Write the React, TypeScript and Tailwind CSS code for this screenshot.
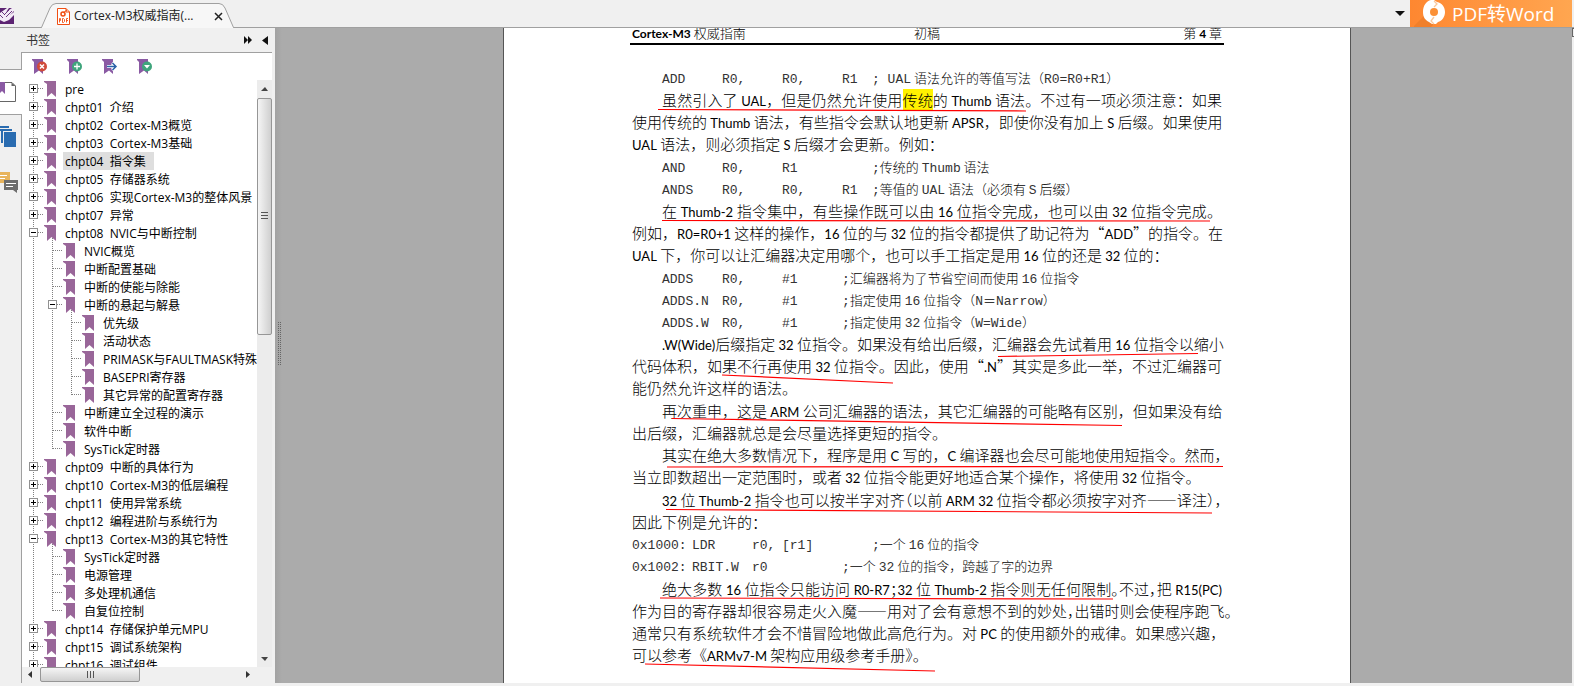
import clsx from "clsx";
import type { ReactNode } from "react";

type Guide = "pass" | "tee" | "end" | "blank";

type Bookmark = {
  label: string;
  open?: boolean;
  closed?: boolean;
  selected?: boolean;
  children?: Bookmark[];
};

const bookmarks: Bookmark[] = [
  { label: "pre", closed: true },
  { label: "chpt01  介绍", closed: true },
  { label: "chpt02  Cortex-M3概览", closed: true },
  { label: "chpt03  Cortex-M3基础", closed: true },
  { label: "chpt04  指令集", closed: true, selected: true },
  { label: "chpt05  存储器系统", closed: true },
  { label: "chpt06  实现Cortex-M3的整体风景", closed: true },
  { label: "chpt07  异常", closed: true },
  {
    label: "chpt08  NVIC与中断控制",
    open: true,
    children: [
      { label: "NVIC概览" },
      { label: "中断配置基础" },
      { label: "中断的使能与除能" },
      {
        label: "中断的悬起与解悬",
        open: true,
        children: [
          { label: "优先级" },
          { label: "活动状态" },
          { label: "PRIMASK与FAULTMASK特殊功" },
          { label: "BASEPRI寄存器" },
          { label: "其它异常的配置寄存器" },
        ],
      },
      { label: "中断建立全过程的演示" },
      { label: "软件中断" },
      { label: "SysTick定时器" },
    ],
  },
  { label: "chpt09  中断的具体行为", closed: true },
  { label: "chpt10  Cortex-M3的低层编程", closed: true },
  { label: "chpt11  使用异常系统", closed: true },
  { label: "chpt12  编程进阶与系统行为", closed: true },
  {
    label: "chpt13  Cortex-M3的其它特性",
    open: true,
    children: [
      { label: "SysTick定时器" },
      { label: "电源管理" },
      { label: "多处理机通信" },
      { label: "自复位控制" },
    ],
  },
  { label: "chpt14  存储保护单元MPU", closed: true },
  { label: "chpt15  调试系统架构", closed: true },
  { label: "chpt16  调试组件", closed: true },
];

function GuideCell({ kind }: { kind: Guide }) {
  return (
    <svg width="19" height="18" className="shrink-0" stroke="#808080" strokeDasharray="1 1" fill="none">
      {(kind === "pass" || kind === "tee") && <path d="M9.5 0V18" />}
      {kind === "end" && <path d="M9.5 0V9" />}
      {(kind === "tee" || kind === "end") && <path d="M10 8.5H19" />}
    </svg>
  );
}

function Toggle({ open, first, last }: { open?: boolean; first?: boolean; last?: boolean }) {
  return (
    <button className="shrink-0" aria-label={open ? "折叠" : "展开"}>
      <svg width="19" height="18" fill="none">
        <g stroke="#808080" strokeDasharray="1 1">
          {!first && <path d="M9.5 0V4" />}
          {!last && <path d="M9.5 14V18" />}
          <path d="M14 8.5H19" />
        </g>
        <rect x="5.5" y="4.5" width="8" height="8" fill="#fff" stroke="#919191" />
        <path d="M7 8.5H12" stroke="#000" />
        {!open && <path d="M9.5 6V11" stroke="#000" />}
      </svg>
    </button>
  );
}

function Flag({ stem }: { stem?: boolean }) {
  return (
    <svg width="20" height="18" className="shrink-0">
      <path d="M1 1H13V17L8.500 13L4 17V4L1 2Z" fill="#996699" />
      {stem && <path d="M9.500 14V18" stroke="#808080" strokeDasharray="1 1" />}
    </svg>
  );
}

function Branch({ items, guides }: { items: Bookmark[]; guides: Guide[] }) {
  const nested = guides.length > 0;
  return (
    <ul>
      {items.map((item, i) => {
        const last = i === items.length - 1;
        return (
          <li key={item.label}>
            <div className="flex h-[18px] items-center">
              {guides.map((g, n) => (
                <GuideCell key={n} kind={g} />
              ))}
              {item.open || item.closed ? (
                <Toggle open={item.open} first={!nested && i === 0} last={nested && last} />
              ) : (
                <GuideCell kind={last ? "end" : "tee"} />
              )}
              <Flag stem={item.open} />
              <button
                className={clsx(
                  "h-[18px] px-[2px] text-left leading-5 whitespace-pre text-black",
                  item.selected && "bg-[#dedede] pr-2"
                )}
              >
                {item.label}
              </button>
            </div>
            {item.children && (
              <Branch items={item.children} guides={[...guides, last ? "blank" : "pass"]} />
            )}
          </li>
        );
      })}
    </ul>
  );
}

function ToolButton({ label, children }: { label: string; children: ReactNode }) {
  return (
    <button aria-label={label}>
      <svg width="17" height="18" viewBox="0 0 17 18" fill="none">
        <path d="M0 1H11V16L7 12.500L2 16V4L0 2Z" fill="#8a5aa3" />
        {children}
      </svg>
    </button>
  );
}

function TabBar() {
  return (
    <header className="flex h-7 shrink-0 border-b border-[#a0a0a0] bg-[#f0f0f0]">
      <svg width="41" height="27" className="shrink-0">
        <rect y="8" width="14" height="16" fill="#5c2472" />
        <path d="M0 13L7 8H9L6 12L12 8H14V11L10 15L14 12V15L9 20L4 22L0 20Z" fill="#f3ebf6" />
        <path d="M0 15L3 18M4 15L9 10M6 17L12 11M2 12L5 15" stroke="#5c2472" strokeWidth="0.900" fill="none" />
      </svg>
      <div className="relative flex h-7 w-[193px] shrink-0 items-center pt-1">
        <svg width="193" height="28" className="absolute inset-0" fill="none">
          <path d="M0.500 27.500L9 8Q11 3.500 15 3.500H178Q182 3.500 184 8L192.500 27.500" fill="#f7f7f7" stroke="#a0a0a0" />
          <path d="M1 27.500H192" stroke="#f7f7f7" />
        </svg>
        <svg width="13" height="17" className="relative ml-4" fill="none" stroke="#f04e12">
          <path d="M0.500 0.500H9L12.500 4V16.500H0.500Z" fill="#fff" />
          <path d="M9 0.500V4H12.500" />
          <circle cx="6" cy="6" r="2" strokeWidth="1.500" />
          <path d="M6 5L10 2" />
          <path d="M2.500 14.500V10.500H3.500V12.500H2.500M5.500 10.500V14.500H6.500L7.500 13.500V11.500L6.500 10.500H5.500M9.500 14.500V10.500H11M9.500 12.500H11" strokeWidth="0.900" />
        </svg>
        <span className="relative ml-1 w-[128px] text-[12px] whitespace-nowrap text-[#222]">Cortex-M3权威指南(...</span>
        <button className="relative ml-3" aria-label="关闭">
          <svg width="9" height="9" stroke="#222" strokeWidth="1.500">
            <path d="M1 1L8 8M8 1L1 8" />
          </svg>
        </button>
      </div>
      <button className="ml-auto pr-1" aria-label="标签列表">
        <svg width="12" height="7">
          <path d="M1 1H11L6 6Z" fill="#111" />
        </svg>
      </button>
      <button className="mr-[2px] flex h-[27px] w-[162px] items-center bg-linear-to-r from-[#fe8730] to-[#ffa650] pl-1 text-white">
        <svg width="34" height="27" viewBox="0 0 34 27" fill="none">
          <path d="M0 26L11 15L20 24L17 27H0Z" fill="#e67a26" opacity="0.600" />
          <path d="M17 0H20L23 2C28 3 31 7 31 12C31 17 28 21 24 22L22 24H18L15 22C11 20 9 17 9 12C9 6 12 1 17 0Z" fill="#fff" />
          <circle cx="20" cy="12" r="4" fill="#fb9036" />
          <path d="M20 1L23 4L20 7M20 24L17 21L20 17" stroke="#f9c79b" strokeWidth="1.300" />
        </svg>
        <span className="ml-1 text-[19px] leading-6 whitespace-nowrap">PDF转Word</span>
      </button>
    </header>
  );
}

function Rail() {
  return (
    <nav className="flex w-[22px] shrink-0 flex-col">
      <div className="h-6 shrink-0" />
      <div className="h-[17px] shrink-0 border-r border-[#a0a0a0]" />
      <button className="h-[46px] shrink-0 border-y border-[#a0a0a0] bg-white" aria-label="书签">
        <svg width="16" height="22" fill="none">
          <path d="M0 1.500H12L15.500 5V20.500H0" stroke="#666" fill="#fff" />
          <path d="M11.500 1.500V5H15.500Z" fill="#666" />
          <path d="M0 1H5V13L2 10L0 12Z" fill="#8a5aa3" />
        </svg>
      </button>
      <div className="flex flex-1 flex-col items-start gap-6 border-r border-[#a0a0a0] pt-[11px]">
        <button aria-label="页面">
          <svg width="17" height="22">
            <path d="M0 0H9V2H0ZM0 3H12V5H3V17H1V5H0Z" fill="#2a6cb0" />
            <rect x="4" y="6" width="12" height="15" fill="#2a6cb0" />
          </svg>
        </button>
        <button aria-label="注释">
          <svg width="19" height="22">
            <path d="M0 0H10V9H4V11H0Z" fill="#e8b45c" />
            <path d="M0 3.500H7M0 6.500H5" stroke="#fff" />
            <path d="M4 8H18V18H17V21L13 18H4Z" fill="#6d6d6d" />
            <path d="M6 11.500H16M6 14.500H13" stroke="#fff" />
          </svg>
        </button>
      </div>
    </nav>
  );
}

function Sidebar() {
  return (
    <aside className="flex w-[253px] shrink-0 flex-col pr-[3px]">
      <div className="flex h-6 shrink-0 items-center pl-1 text-[12px] text-[#333]">
        <h2 className="flex-1 pt-[2px]">书签</h2>
        <button aria-label="展开面板">
          <svg width="9" height="8">
            <path d="M0 0L4 4L0 8ZM4 0L8 4L4 8Z" fill="#111" />
          </svg>
        </button>
        <button className="mr-1 ml-[9px]" aria-label="隐藏面板">
          <svg width="6" height="9">
            <path d="M6 0V9L0 4.500Z" fill="#111" />
          </svg>
        </button>
      </div>
      <div className="flex h-7 shrink-0 items-center gap-[18px] border-t border-[#a0a0a0] bg-white pl-[10px]">
        <ToolButton label="删除书签">
          <circle cx="10" cy="8.500" r="5" fill="#d04a3a" />
          <path d="M8 6.500L12 10.500M12 6.500L8 10.500" stroke="#fff" strokeWidth="1.500" />
        </ToolButton>
        <ToolButton label="添加书签">
          <circle cx="10" cy="8.500" r="5" fill="#3fa57c" />
          <path d="M7 8.500H13M10 5.500V11.500" stroke="#fff" strokeWidth="1.300" />
        </ToolButton>
        <ToolButton label="转到书签">
          <path d="M5 8.500H13M10 5L14 8.500L10 12" stroke="#fff" strokeWidth="3" />
          <path d="M5 8.500H14M10.500 5L14 8.500L10.500 12" stroke="#2a62a8" strokeWidth="1.500" />
        </ToolButton>
        <ToolButton label="书签选项">
          <circle cx="10" cy="8.500" r="5" fill="#3fa57c" />
          <path d="M7 7H13L10 10.500Z" fill="#fff" />
        </ToolButton>
      </div>
      <div className="flex min-h-0 flex-1">
        <div className="min-w-0 flex-1 overflow-hidden bg-white pl-[2px] text-[12px]">
          <Branch items={bookmarks} guides={[]} />
        </div>
        <div className="flex w-[15px] shrink-0 flex-col items-center bg-[#ececec]">
          <svg width="15" height="18" className="shrink-0">
            <path d="M4 11L8 7L11 11Z" fill="#444" />
          </svg>
          <div className="flex h-[237px] w-full justify-center rounded-xs border border-[#969696] bg-linear-to-r from-[#f5f5f5] to-[#cfcfcf] pt-[112px]">
            <svg width="7" height="10" stroke="#555">
              <path d="M0 1.500H7M0 4.500H7M0 7.500H7" />
            </svg>
          </div>
          <svg width="15" height="17" className="mt-auto shrink-0">
            <path d="M4 7H11L8 11Z" fill="#444" />
          </svg>
        </div>
      </div>
      <div className="flex h-4 shrink-0 items-start pr-4">
        <svg width="18" height="15" className="shrink-0">
          <path d="M10 4V11L6 7.500Z" fill="#333" />
        </svg>
        <div className="flex h-[15px] w-[100px] items-center justify-center rounded-xs border border-[#969696] bg-linear-to-b from-[#f5f5f5] to-[#cfcfcf]">
          <svg width="9" height="7" stroke="#555">
            <path d="M1.500 0V7M4.500 0V7M7.500 0V7" />
          </svg>
        </div>
        <svg width="15" height="15" className="ml-auto shrink-0">
          <path d="M5 4V11L9 7.500Z" fill="#333" />
        </svg>
      </div>
    </aside>
  );
}

const LATIN = /([\w.,:#[\]()+=;-](?:[\w.()+=\- ]*[\w.,:[\]()+=-])?)/;

// *text* is highlighted, ~x sets the mark x half as wide, runs of Latin get the Latin face
function mix(text: string, latin = "font-['Lato'] text-[13px] font-normal text-black") {
  return text.split(/(\*[^*]+\*|~.)/).map((part, i) => {
    if (part[0] === "*") return <mark key={i} className="bg-[#fff200] text-black">{part.slice(1, -1)}</mark>;
    if (part[0] === "~") return <span key={i} className="[font-feature-settings:'halt']">{part[1]}</span>;
    return part.split(LATIN).map((run, n) =>
      n % 2 ? <span key={`${i}-${n}`} className={latin}>{run}</span> : run
    );
  });
}

function Line({ text, indent, full }: { text: string; indent?: boolean; full?: boolean }) {
  return (
    <span
      className={clsx(
        "block h-[22px] whitespace-nowrap",
        indent && "pl-[30px]",
        full && "[text-align-last:justify]"
      )}
    >
      {mix(text)}
    </span>
  );
}

function Code({ cols, widths, indent = true }: { cols: string[]; widths: number[]; indent?: boolean }) {
  return (
    <code
      className={clsx(
        "flex h-[22px] font-['Noto_Sans_CJK_SC',sans-serif] text-[13px] leading-[22px] whitespace-pre text-black",
        indent && "pl-[30px]"
      )}
    >
      {cols.map((c, i) => (
        <span key={i} className="shrink-0" style={{ width: widths[i] }}>
          {mix(c, "font-['Liberation_Mono'] font-normal text-[#333]")}
        </span>
      ))}
    </code>
  );
}

function Underlines() {
  return (
    <svg width="594" height="655" className="pointer-events-none absolute top-0 left-0 overflow-visible" stroke="#f00" strokeWidth="1.200">
      <path d="M28 81.500L396 83" />
      <path d="M32 192.500L580 193" />
      <path d="M368 328.500L568 325.500" />
      <path d="M92 347L263 355" />
      <path d="M42 390.500L492 397.500" />
      <path d="M37 439L593 438.500" />
      <path d="M36 481.500L582 485" />
      <path d="M30 570L483 571" />
      <path d="M15 636L305 643" />
    </svg>
  );
}

function Paper() {
  return (
    <article
      lang="zh-CN"
      className="mx-auto w-[848px] border-x border-[#555] bg-white px-[126px] font-['Noto_Sans_CJK_SC',sans-serif] text-[15px] leading-[22px] font-light text-black"
    >
      <div className="relative">
        <div className="grid h-[17px] grid-cols-3 border-b-2 border-black px-[2px] text-[13px] leading-[10px]">
          <span>{mix("Cortex-M3 权威指南", "font-['Lato'] text-[12px] font-bold")}</span>
          <span className="text-center">初稿</span>
          <span className="text-right">{mix("第 4 章", "font-['Lato'] text-[12px] font-bold")}</span>
        </div>
        <div className="px-[2px] pt-[22px]">
          <Code cols={["ADD", "R0,", "R0,", "R1", "; UAL 语法允许的等值写法（R0=R0+R1）"]} widths={[60, 60, 60, 30, 260]} />
          <p>
            <Line indent full text="虽然引入了 UAL，但是仍然允许使用*传统*的 Thumb 语法。不过有一项必须注意：如果" />
            <Line full text="使用传统的 Thumb 语法，有些指令会默认地更新 APSR，即使你没有加上 S 后缀。如果使用" />
            <Line text="UAL 语法，则必须指定 S 后缀才会更新。例如：" />
          </p>
          <div className="mt-px">
            <Code cols={["AND", "R0,", "R1", "", ";传统的 Thumb 语法"]} widths={[60, 60, 60, 30, 260]} />
            <Code cols={["ANDS", "R0,", "R0,", "R1", ";等值的 UAL 语法（必须有 S 后缀）"]} widths={[60, 60, 60, 30, 260]} />
          </div>
          <p>
            <Line indent full text="在 Thumb-2 指令集中，有些操作既可以由 16 位指令完成，也可以由 32 位指令完成。" />
            <Line full text="例如，R0=R0+1 这样的操作，16 位的与 32 位的指令都提供了助记符为“ADD”的指令。在" />
            <Line text="UAL 下，你可以让汇编器决定用哪个，也可以手工指定是用 16 位的还是 32 位的：" />
          </p>
          <div className="mt-px">
            <Code cols={["ADDS", "R0,", "#1", ";汇编器将为了节省空间而使用 16 位指令"]} widths={[60, 60, 60, 300]} />
            <Code cols={["ADDS.N", "R0,", "#1", ";指定使用 16 位指令（N＝Narrow）"]} widths={[60, 60, 60, 300]} />
            <Code cols={["ADDS.W", "R0,", "#1", ";指定使用 32 位指令（W=Wide）"]} widths={[60, 60, 60, 300]} />
          </div>
          <p>
            <Line indent full text=".W(Wide)后缀指定 32 位指令。如果没有给出后缀，汇编器会先试着用 16 位指令以缩小" />
            <Line full text="代码体积，如果不行再使用 32 位指令。因此，使用“.N”其实是多此一举，不过汇编器可" />
            <Line text="能仍然允许这样的语法。" />
          </p>
          <p className="mt-px">
            <Line indent full text="再次重申，这是 ARM 公司汇编器的语法，其它汇编器的可能略有区别，但如果没有给" />
            <Line text="出后缀，汇编器就总是会尽量选择更短的指令。" />
          </p>
          <p>
            <Line indent full text="其实在绝大多数情况下，程序是用 C 写的，C 编译器也会尽可能地使用短指令。然而~，" />
            <Line text="当立即数超出一定范围时，或者 32 位指令能更好地适合某个操作，将使用 32 位指令。" />
          </p>
          <p className="mt-px">
            <Line indent full text="32 位 Thumb-2 指令也可以按半字对齐~（以前 ARM 32 位指令都必须按字对齐——译注~）~，" />
            <Line text="因此下例是允许的：" />
          </p>
          <div>
            <Code indent={false} cols={["0x1000:", "LDR", "r0,", "[r1]", ";一个 16 位的指令"]} widths={[60, 60, 30, 90, 260]} />
            <Code indent={false} cols={["0x1002:", "RBIT.W", "r0", ";一个 32 位的指令，跨越了字的边界"]} widths={[60, 60, 90, 300]} />
          </div>
          <p className="mt-px">
            <Line indent full text="绝大多数 16 位指令只能访问 R0-R7~；32 位 Thumb-2 指令则无任何限制~。不过~，把 R15(PC)" />
            <Line full text="作为目的寄存器却很容易走火入魔——用对了会有意想不到的妙处~，出错时则会使程序跑飞。" />
            <Line text="通常只有系统软件才会不惜冒险地做此高危行为。对 PC 的使用额外的戒律。如果感兴趣，" />
            <Line text="可以参考《ARMv7-M 架构应用级参考手册》。" />
          </p>
        </div>
        <Underlines />
      </div>
    </article>
  );
}

export default function App() {
  return (
    <div className="flex h-screen flex-col overflow-hidden bg-[#f0f0f0] pb-[3px] font-['Open_Sans','Noto_Sans_CJK_SC',sans-serif]">
      <TabBar />
      <div className="flex min-h-0 flex-1">
        <Rail />
        <Sidebar />
        <div className="flex w-[7px] shrink-0 items-center bg-linear-to-r from-[#a2a2a2] to-[#ababab] pb-[24px] pl-[3px]">
          <svg width="4" height="44" stroke="#666" strokeDasharray="1 1">
            <path d="M0.500 0V44M2.500 0V44" />
          </svg>
        </div>
        <main className="flex min-w-0 flex-1 overflow-hidden bg-[#ababab]">
          <Paper />
        </main>
        <div className="w-[2px] shrink-0">
          <div className="h-[9px] border border-r-0 border-[#666]" />
        </div>
      </div>
    </div>
  );
}
